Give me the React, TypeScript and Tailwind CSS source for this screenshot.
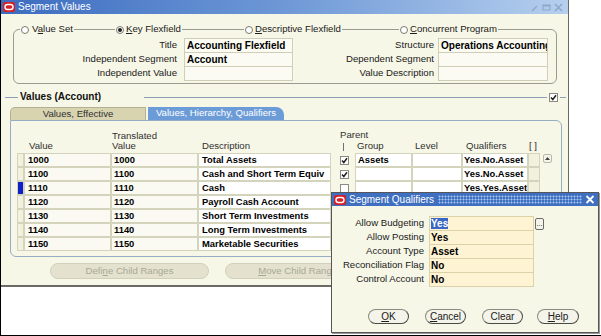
import React from "react";

const font = "font-['Liberation_Sans',Arial,sans-serif]";

function OracleIcon() {
  return (
    <svg width="12" height="10" viewBox="0 0 12 10">
      <rect x="0" y="0" width="12" height="10" rx="2" fill="#d42027" />
      <rect x="2" y="2.5" width="8" height="5" rx="2.5" fill="none" stroke="#fff" strokeWidth="1.4" />
    </svg>
  );
}

function Radio({ on }: { on?: boolean }) {
  return (
    <span className="flex h-[8px] w-[8px] items-center justify-center rounded-full border border-[#7a7a70] bg-white">
      {on && <span className="h-[4px] w-[4px] rounded-full bg-[#202020]" />}
    </span>
  );
}

function Check({ on }: { on?: boolean }) {
  return (
    <span className="flex h-[9px] w-[9px] items-center justify-center border border-[#8a8a80] bg-white">
      {on && (
        <svg width="7" height="7" viewBox="0 0 7 7">
          <path d="M1 3.5 L2.8 5.5 L6 1.2" fill="none" stroke="#202020" strokeWidth="1.5" />
        </svg>
      )}
    </span>
  );
}

function TopField({ w, v }: { w: string; v?: string }) {
  return (
    <div className={`${w} h-[15px] overflow-hidden whitespace-nowrap border border-[#cfcfb8] bg-[#fbfbf3] pl-[2px] text-[10px] font-bold leading-[13px] text-black`}>
      {v}
    </div>
  );
}

const rows = [
  { v: "1000", d: "Total Assets", p: true, g: "Assets", q: "Yes.No.Asset" },
  { v: "1100", d: "Cash and Short Term Equiv", p: true, g: "", q: "Yes.No.Asset" },
  { v: "1110", d: "Cash", p: false, g: "", q: "Yes.Yes.Asset", cur: true },
  { v: "1120", d: "Payroll Cash Account", p: false, g: "", q: "" },
  { v: "1130", d: "Short Term Investments", p: false, g: "", q: "" },
  { v: "1140", d: "Long Term Investments", p: false, g: "", q: "" },
  { v: "1150", d: "Marketable Securities", p: false, g: "", q: "" },
];

const cell = "h-[14px] overflow-hidden whitespace-nowrap border border-[#d4d4bc] text-[9.4px] font-bold leading-[12px] text-black";

function DlgButton({ children, w }: { children: React.ReactNode; w: string }) {
  return (
    <div className={`${w} flex h-[15px] items-center justify-center rounded-full border border-[#8a8a80] border-b-[#4a4a44] border-r-[#4a4a44] bg-[#f4f4ea] text-[10px] text-[#202020]`}>
      {children}
    </div>
  );
}

export default function App() {
  return (
    <div className={`${font} relative h-[336px] w-[601px] overflow-hidden border-b border-l border-black bg-white`}>
      {/* main window */}
      <div className="flex h-[287px] w-[568px] flex-col border-b-2 border-r border-b-[#6a6a66] border-r-[#6a6a66] bg-[#f7f7e7]">
        <div className="flex h-[14px] items-center bg-gradient-to-r from-[#3c6cc0] via-[#6e98d6] to-[#b6cfee] pl-[2px]">
          <OracleIcon />
          <span className="ml-[3px] text-[10px] leading-none text-white">Segment Values</span>
          <div className="flex-1" />
          <svg width="34" height="9" viewBox="0 0 34 9" className="mr-[4px]">
            <path d="M2 8 L7 3" stroke="#8ea8cc" strokeWidth="1.4" />
            <path d="M13 2 H20 V7 H13 Z M13 3 H20" fill="none" stroke="#8ea8cc" strokeWidth="1.2" />
            <path d="M25 1 L32 8 M32 1 L25 8" stroke="#8ea8cc" strokeWidth="1.6" />
          </svg>
        </div>

        {/* key flexfield group */}
        <div className="relative ml-[12px] mt-[15px] h-[55px] w-[544px] rounded-[6px] border border-[#9a9a90]">
          <div className="absolute left-[6px] top-[-7px] flex h-[13px] items-center gap-[3px] bg-[#f7f7e7] px-[1px] text-[9.6px] text-[#202020]">
            <Radio />
            <span>V<u>a</u>lue Set</span>
          </div>
          <div className="absolute left-[101px] top-[-7px] flex h-[13px] items-center gap-[2px] bg-[#f7f7e7] px-[1px] text-[9.6px] text-[#202020]">
            <Radio on />
            <span><u>K</u>ey Flexfield</span>
          </div>
          <div className="absolute left-[230px] top-[-7px] flex h-[13px] items-center gap-[2px] bg-[#f7f7e7] px-[1px] text-[9.6px] text-[#202020]">
            <Radio />
            <span><u>D</u>escriptive Flexfield</span>
          </div>
          <div className="absolute left-[385px] top-[-7px] flex h-[13px] items-center gap-[2px] bg-[#f7f7e7] px-[1px] text-[9.6px] text-[#202020]">
            <Radio />
            <span><u>C</u>oncurrent Program</span>
          </div>

          <div className="flex flex-col pt-[8px] text-[9.6px] text-[#202020]">
            {[
              ["Title", "Accounting Flexfield", "Structure", "Operations Accounting"],
              ["Independent Segment", "Account", "Dependent Segment", ""],
              ["Independent Value", "", "Value Description", ""],
            ].map((r, i) => (
              <div key={i} className={`flex h-[15px] items-center ${i > 0 ? "-mt-px" : ""}`}>
                <div className="w-[163px] text-right">{r[0]}</div>
                <div className="ml-[7px]">
                  <TopField w="w-[109px]" v={r[1]} />
                </div>
                <div className="w-[141px] text-right">{r[2]}</div>
                <div className="ml-[4px]">
                  <TopField w="w-[110px]" v={r[3]} />
                </div>
              </div>
            ))}
          </div>
        </div>

        {/* section header */}
        <div className="mt-[8px] flex h-[10px] items-center">
          <div className="ml-[4px] h-px w-[13px] bg-[#8ea0b8]" />
          <span className="ml-[2px] text-[10px] font-bold leading-none text-[#101010]">Values (Account)</span>
          <div className="ml-[43px] h-px w-[403px] bg-[#8ea0b8]" />
          <div className="ml-[2px]">
            <Check on />
          </div>
          <div className="ml-[2px] h-px w-[6px] bg-[#8ea0b8]" />
        </div>

        {/* tabs */}
        <div className="ml-[9px] mt-[5px] flex h-[13px] items-end">
          <div className="flex h-[13px] w-[136px] items-center justify-center rounded-tl-[5px] border border-b-0 border-[#b4b094] bg-[#d8d4b0] text-[9.6px] text-[#303030]">
            Values, Effective
          </div>
          <div className="ml-[2px] flex h-[13px] w-[136px] items-center justify-center rounded-tr-[8px] bg-[#6c9cd8] text-[9.6px] text-white">
            Values, Hierarchy, Qualifiers
          </div>
        </div>

        {/* tab panel */}
        <div className="ml-[9px] h-[137px] w-[552px] rounded-b-[6px] rounded-tr-[6px] border border-[#98acc4]">
          <div className="flex h-[32px] items-end pl-[6px] text-[9.6px] leading-[10px] text-[#303030]">
            <div className="w-[7px]" />
            <div className="w-[87px] pb-[2px] pl-[5px]">Value</div>
            <div className="w-[87px] pb-[2px] pl-[1px]">
              Translated
              <br />
              Value
            </div>
            <div className="w-[133px] pb-[2px] pl-[4px]">Description</div>
            <div className="ml-[9px] flex w-[72px] flex-col pb-[2px]">
              <div className="pb-[1px]">Parent</div>
              <div className="flex items-end">
                <div className="ml-[3px] h-[8px] w-px bg-[#707070]" />
                <div className="ml-[13px]">Group</div>
              </div>
            </div>
            <div className="w-[50px] pb-[2px] pl-[3px]">Level</div>
            <div className="w-[66px] pb-[2px] pl-[4px]">Qualifiers</div>
            <div className="w-[12px] pb-[2px] pl-[1px]">[ ]</div>
          </div>

          <div className="flex">
            <div className="flex flex-col pl-[6px]">
              {rows.map((r) => (
                <div key={r.v} className="flex h-[14px] items-center">
                  <div className={`h-[14px] w-[7px] border border-[#d4d4bc] ${r.cur ? "bg-[#1020c8]" : "bg-[#f1f1de]"}`} />
                  <div className={`${cell} w-[87px] bg-[#fafaf2] pl-[3px]`}>{r.v}</div>
                  <div className={`${cell} w-[87px] bg-[#fafaf2] pl-[2px]`}>{r.v}</div>
                  <div className={`${cell} w-[133px] bg-white pl-[3px]`}>{r.d}</div>
                  <div className="ml-[9px]">
                    <Check on={r.p} />
                  </div>
                  <div className={`${cell} ml-[6px] w-[57px] bg-white pl-[2px]`}>{r.g}</div>
                  <div className={`${cell} w-[50px] bg-white`} />
                  <div className={`${cell} w-[66px] bg-white pl-[1px]`}>{r.q}</div>
                  <div className={`${cell} w-[12px] bg-[#f1f1de]`} />
                </div>
              ))}
            </div>
            <div className="ml-[3px] mt-[1px] flex h-[9px] w-[9px] items-center justify-center rounded-[2px] border border-[#b8b8a8] bg-[#f4f4ea]">
              <svg width="5" height="3" viewBox="0 0 5 3">
                <path d="M0 3 L2.5 0 L5 3 Z" fill="#404040" />
              </svg>
            </div>
          </div>
        </div>

        {/* buttons */}
        <div className="mt-[6px] flex h-[16px]">
          <div className="ml-[49px] flex h-[16px] w-[159px] items-center justify-center rounded-full border border-[#d2d0bc] bg-[#e4e2ce] text-[9.6px] text-[#a8a898]">
            Defi<u>n</u>e Child Ranges
          </div>
          <div className="ml-[16px] flex h-[16px] w-[150px] items-center justify-center rounded-full border border-[#d2d0bc] bg-[#e4e2ce] text-[9.6px] text-[#a8a898]">
            <u>M</u>ove Child Ranges
          </div>
        </div>
      </div>

      {/* Segment Qualifiers dialog */}
      <div className="absolute left-[330px] top-[192px] flex h-[141px] w-[268px] flex-col border border-[#56565a] bg-[#f7f7e7] shadow-[1px_1px_0_#9a9a9a]">
        <div className="flex h-[13px] items-center bg-[#3f6fc0] pl-[2px]">
          <OracleIcon />
          <span className="ml-[3px] text-[10px] leading-none text-white">Segment Qualifiers</span>
          <div className="ml-[4px] h-[9px] flex-1 bg-[radial-gradient(circle,#a4c4ee_0.9px,transparent_1.1px)] bg-[length:3px_3px]" />
          <svg width="10" height="9" viewBox="0 0 10 9" className="mx-[3px]">
            <path d="M1.5 1 L8.5 8 M8.5 1 L1.5 8" stroke="#fff" strokeWidth="1.8" />
          </svg>
        </div>

        <div className="mt-[10px] flex flex-col text-[9.6px] text-[#202020]">
          {[
            ["Allow Budgeting", "Yes"],
            ["Allow Posting", "Yes"],
            ["Account Type", "Asset"],
            ["Reconciliation Flag", "No"],
            ["Control Account", "No"],
          ].map(([l, v], i) => (
            <div key={l} className={`flex h-[15px] items-center ${i > 0 ? "-mt-px" : ""}`}>
              <div className="w-[92px] text-right">{l}</div>
              <div className="ml-[5px] h-[15px] w-[105px] border border-[#dcd2aa] bg-[#fef3d2] pl-[1px] text-[10px] font-bold leading-[13px] text-black">
                {i === 0 ? <span className="bg-[#3a66c6] text-white">{v}</span> : v}
              </div>
              {i === 0 && (
                <div className="ml-[1px] flex h-[12px] w-[9px] items-center justify-center rounded-[2px] border border-[#6a6a66] bg-[#f4f4ea] text-[7px] leading-none text-black">
                  ...
                </div>
              )}
            </div>
          ))}
        </div>

        <div className="ml-[36px] mt-[22px] flex">
          <DlgButton w="w-[41px]">
            <u>O</u>K
          </DlgButton>
          <div className="ml-[16px]">
            <DlgButton w="w-[41px]">
              <u>C</u>ancel
            </DlgButton>
          </div>
          <div className="ml-[16px]">
            <DlgButton w="w-[41px]">Clear</DlgButton>
          </div>
          <div className="ml-[14px]">
            <DlgButton w="w-[42px]">
              <u>H</u>elp
            </DlgButton>
          </div>
        </div>
      </div>
    </div>
  );
}
